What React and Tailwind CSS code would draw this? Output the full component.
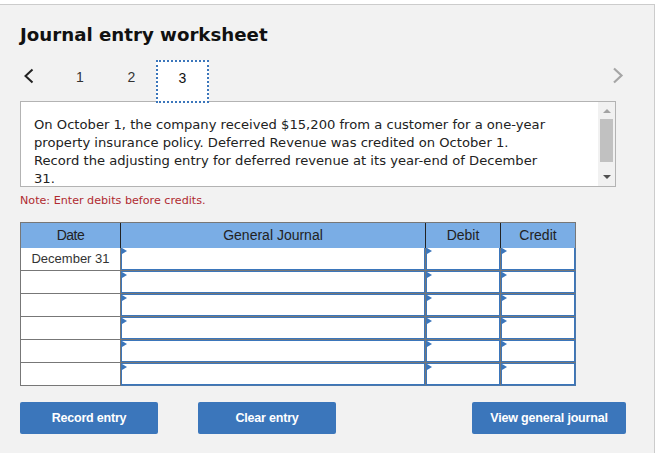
import React from "react";

const sans = "font-['Liberation_Sans',Arial,sans-serif]";
const deja = "font-['DejaVu_Sans',Verdana,sans-serif]";
const cols = "grid grid-cols-[101px_305px_75px_75px]";

const JournalInput = ({ first, last, end }) => (
    <div className={`border-b border-r ${last ? "border-b-[#4d78aa]" : "border-b-[#777]"} ${end ? "border-r-[#4d78aa]" : "border-r-[#777]"}`}>
        <div className={`relative h-full bg-white border border-[#3b76bb] ${first ? "border-t-0" : ""}`}>
            <span className="absolute left-0 top-0 w-0 h-0 border-y-[3.5px] border-y-transparent border-l-[5px] border-l-[#3b76bb]" />
        </div>
    </div>
);

const Row = ({ date, first, last }) => (
    <div className={`${cols} h-[23px]`}>
        <div className={`${sans} bg-white border-l border-r border-b border-[#777] text-[13px] text-[#333] text-center leading-[21px]`}>
            {date}
        </div>
        <JournalInput first={first} last={last} />
        <JournalInput first={first} last={last} />
        <JournalInput first={first} last={last} end />
    </div>
);

const Button = ({ children, className }) => (
    <button className={`${sans} h-[32px] bg-[#3b76bb] rounded-[2px] text-white text-[12.5px] font-bold tracking-[-0.2px] ${className}`}>
        {children}
    </button>
);

export default function App() {
    return (
        <div className="w-[658px] h-[453px] overflow-hidden bg-white pt-[4px] pr-[3px]">
            <div className="h-[449px] bg-[#f2f2f2] border-t border-r border-[#cccccc] px-[20px]">
                {/* Title */}
                <h1 className={`${deja} font-bold text-[18.2px] text-[#111] leading-[24px] pt-[18px]`}>
                    Journal entry worksheet
                </h1>

                {/* Tabs */}
                <div className="relative z-10 flex items-start justify-between h-[44px] mt-[13px] -mb-[3px]">
                    <div className="flex items-start">
                        <svg width="12" height="16" viewBox="0 0 12 16" className="ml-[3px] mt-[8px]" fill="none">
                            <path d="M9.5 1.5 2.5 8l7 6.5" stroke="#222" strokeWidth="2" />
                        </svg>
                        <div className={`${sans} flex text-[14px] text-[#333] ml-[20px]`}>
                            <div className="w-[51px] h-[43px] text-center leading-[34px] pr-[1px]">1</div>
                            <div className="w-[51px] h-[43px] text-center leading-[34px]">2</div>
                            <div className="w-[53px] h-[43px] -ml-[1px] text-center leading-[32px] bg-white border-2 border-dotted border-[#3b76bb] text-[#111]">3</div>
                        </div>
                    </div>
                    <svg width="12" height="18" viewBox="0 0 12 18" className="mr-[10px] mt-[7px]" fill="none">
                        <path d="M2 1.5 9.5 8.5 2 15.5" stroke="#a6a6a6" strokeWidth="2.2" />
                    </svg>
                </div>

                {/* Question */}
                <div className="flex w-[596px] h-[86px] bg-white border border-[#b3b3b3]">
                    <p className={`${deja} flex-1 text-[13.13px] leading-[18px] text-[#222] pl-[13px] pt-[14px] pr-[48px]`}>
                        On October 1, the company received $15,200 from a customer for a one-year property insurance policy. Deferred Revenue was credited on October 1. Record the adjusting entry for deferred revenue at its year-end of December 31.
                    </p>
                    <div className="w-[17px] bg-[#f1f1f1] flex flex-col items-center justify-between py-[7px]">
                        <span className="w-0 h-0 border-x-[4px] border-x-transparent border-b-[4px] border-b-[#a3a3a3]" />
                        <span className="w-[13px] h-[43px] bg-[#c1c1c1] -mt-[1px] mb-[7px]" />
                        <span className="w-0 h-0 border-x-[4px] border-x-transparent border-t-[4px] border-t-[#505050]" />
                    </div>
                </div>

                {/* Note */}
                <p className={`${deja} text-[11.15px] leading-[14px] text-[#b02a30] mt-[7px]`}>
                    Note: Enter debits before credits.
                </p>

                {/* Table */}
                <div className="w-[556px] mt-[14px]">
                    <div className={`${sans} ${cols} h-[26px] bg-[#7aade5] text-[14px] text-[#222] text-center leading-[25px] border-t border-[#777]`}>
                        <div className="border-l border-l-[#777] border-r border-r-[#222] border-b border-b-[#222] tracking-[-0.5px]">Date</div>
                        <div className="border-r border-b border-[#222]">General Journal</div>
                        <div className="border-r border-b border-[#222]">Debit</div>
                        <div className="border-r border-r-[#777] border-b border-b-[#222]">Credit</div>
                    </div>
                    <Row date="December 31" first />
                    <Row />
                    <Row />
                    <Row />
                    <Row />
                    <Row last />
                </div>

                {/* Buttons */}
                <div className="flex justify-between w-[606px] mt-[16px]">
                    <div className="flex gap-[40px]">
                        <Button className="w-[138px]">Record entry</Button>
                        <Button className="w-[138px]">Clear entry</Button>
                    </div>
                    <Button className="w-[154px]">View general journal</Button>
                </div>
            </div>
        </div>
    );
}
